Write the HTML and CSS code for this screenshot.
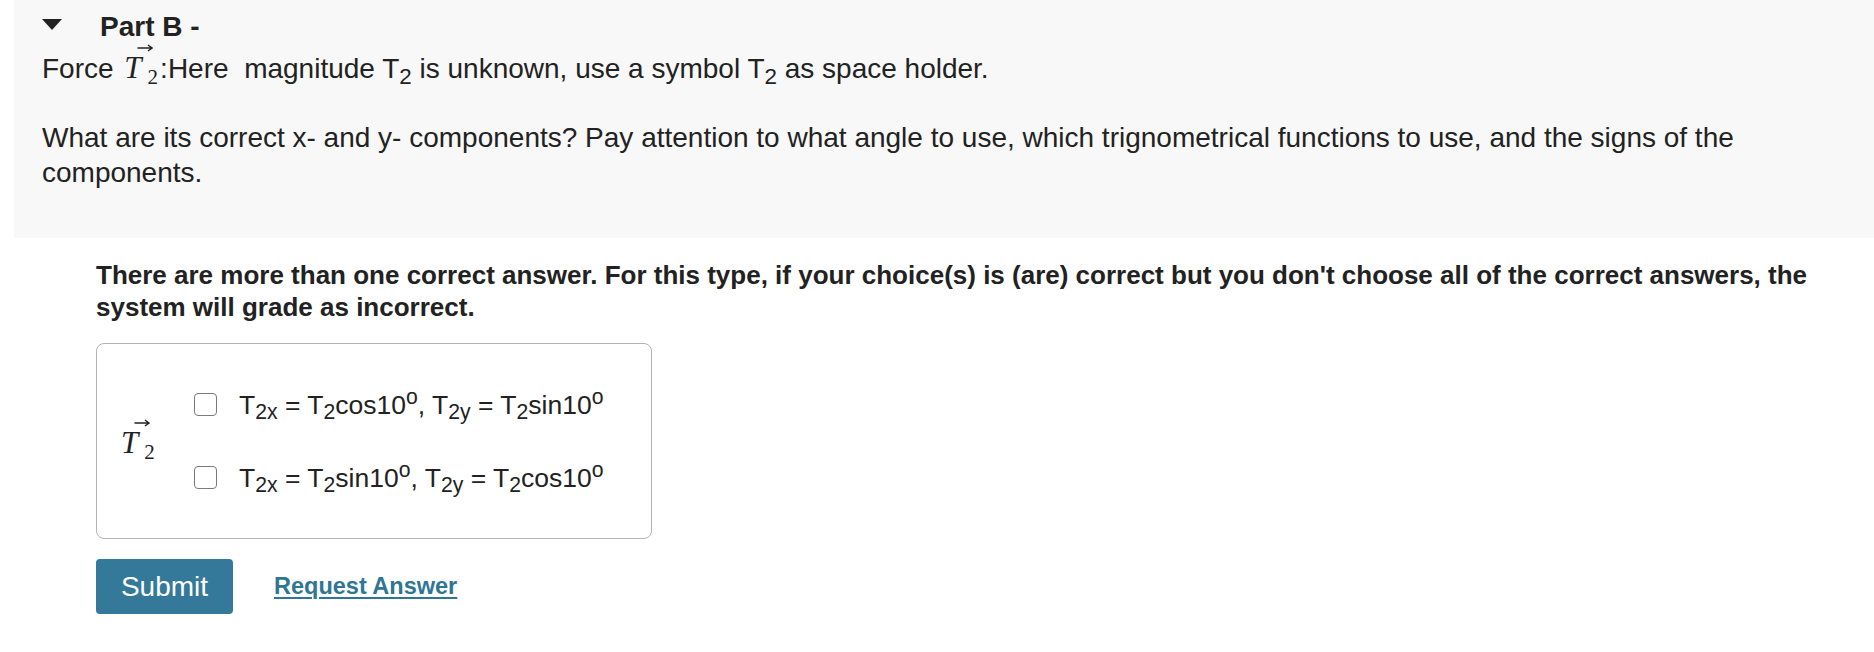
FILE: index.html
```html
<!DOCTYPE html>
<html lang="en">
<head>
<meta charset="utf-8">
<title>Part B</title>
<link rel="stylesheet" href="styles.css">
</head>
<body>
<section class="panel">
  <div class="part-head">
    <svg class="caret" width="20" height="11" viewBox="0 0 20 11"><polygon points="0,0 20,0 10,11" fill="#222"/></svg>
    <span class="part-title">Part B -</span>
  </div>
  <p class="prompt">Force <span class="vec"><span class="vec-t">T</span><svg class="arrow" width="16" height="8" viewBox="0 0 16 8"><path d="M0.5 4H14.5M11 1L15 4L11 7" fill="none" stroke="#222" stroke-width="1.4"/></svg><span class="vec-sub">2</span></span>:Here&nbsp; magnitude T<sub>2</sub> is unknown, use a symbol T<sub>2</sub> as space holder.</p>
  <p class="prompt q">What are its correct x- and y- components? Pay attention to what angle to use, which trignometrical functions to use, and the signs of the components.</p>
</section>
<section class="answer">
  <p class="note">There are more than one correct answer. For this type, if your choice(s) is (are) correct but you don't choose all of the correct answers, the system will grade as incorrect.</p>
  <div class="choices">
    <div class="label"><span class="vec"><span class="vec-t">T</span><svg class="arrow" width="16" height="8" viewBox="0 0 16 8"><path d="M0.5 4H14.5M11 1L15 4L11 7" fill="none" stroke="#222" stroke-width="1.4"/></svg><span class="vec-sub">2</span></span></div>
    <div class="options">
      <label class="opt"><span class="cb"></span><span class="opt-text">T<sub>2x</sub> = T<sub>2</sub>cos10<sup>o</sup>, T<sub>2y</sub> = T<sub>2</sub>sin10<sup>o</sup></span></label>
      <label class="opt"><span class="cb"></span><span class="opt-text">T<sub>2x</sub> = T<sub>2</sub>sin10<sup>o</sup>, T<sub>2y</sub> = T<sub>2</sub>cos10<sup>o</sup></span></label>
    </div>
  </div>
  <div class="actions">
    <button class="submit" type="button">Submit</button>
    <a class="request" href="#">Request Answer</a>
  </div>
</section>
</body>
</html>
```
FILE: styles.css
```css
body {
  margin: 0;
  font-family: "Liberation Sans", Arial, sans-serif;
  color: #222;
  background: #fff;
}

.panel {
  margin-left: 14px;
  background: #f8f8f8;
  padding: 9px 80px 0 28px;
  height: 238px;
  box-sizing: border-box;
}

.part-head {
  display: flex;
  align-items: center;
  height: 36px;
}

.caret {
  margin-bottom: 5px;
  margin-right: 38px;
}

.part-title {
  font-size: 28px;
  font-weight: bold;
  line-height: 36px;
}

.prompt {
  margin: 6px 0 0;
  font-size: 28px;
  line-height: 35px;
}

.prompt.q {
  margin-top: 34px;
}

sub, sup {
  line-height: 0;
  font-size: 0.8em;
}

sub {
  vertical-align: -0.25em;
}

sup {
  vertical-align: 0.45em;
}

.vec {
  position: relative;
  display: inline-block;
  font-family: "Liberation Serif", "DejaVu Serif", serif;
  line-height: 1;
  margin-left: 3px;
  margin-right: 2px;
}

.vec-t {
  font-style: italic;
  font-size: 31px;
}

.vec-sub {
  font-size: 21px;
  position: relative;
  top: 6px;
  margin-left: 6px;
}

.arrow {
  position: absolute;
  left: 13px;
  top: -8px;
}

.answer {
  padding: 0 18px 0 96px;
}

.note {
  margin: 21px 0 0;
  font-size: 26px;
  font-weight: bold;
  line-height: 32px;
}

.choices {
  margin-top: 20px;
  width: 556px;
  height: 196px;
  box-sizing: border-box;
  border: 1.5px solid #b3b3b3;
  border-radius: 8px;
  display: flex;
  align-items: center;
  padding-left: 21px;
}

.label {
  width: 76px;
  padding-top: 2px;
}

.options {
  display: flex;
  flex-direction: column;
  gap: 37px;
}

.opt {
  display: flex;
  align-items: center;
  height: 36px;
  font-size: 26.5px;
  line-height: 36px;
}

.cb {
  width: 23px;
  height: 23px;
  box-sizing: border-box;
  border: 1.5px solid #7a7a7a;
  border-radius: 4px;
  background: #fff;
  margin-right: 22px;
}

.actions {
  margin-top: 20px;
  display: flex;
  align-items: center;
}

.submit {
  width: 137px;
  height: 55px;
  background: #35799a;
  color: #fff;
  border: none;
  border-radius: 4px;
  font-family: "Liberation Sans", Arial, sans-serif;
  font-size: 28px;
  padding: 0;
}

.request {
  margin-left: 41px;
  font-size: 23.5px;
  font-weight: bold;
  color: #2f7695;
  text-decoration: underline;
  text-decoration-thickness: 2px;
  text-underline-offset: 3px;
}
```
